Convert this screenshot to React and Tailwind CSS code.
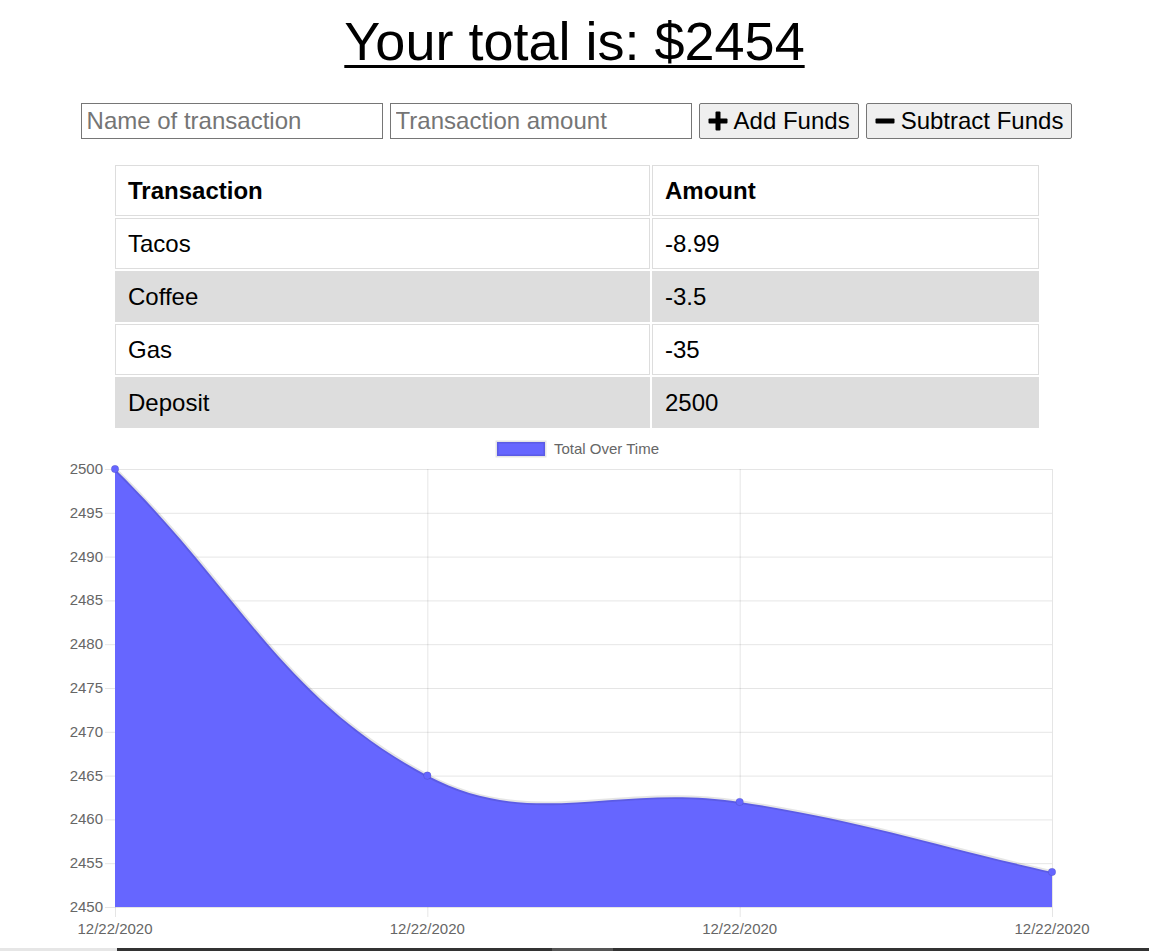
import { useMemo } from 'react'

const FONT = { fontFamily: '"Liberation Sans", Arial, sans-serif' }

const rows = [
  { name: 'Tacos', amount: '-8.99' },
  { name: 'Coffee', amount: '-3.5' },
  { name: 'Gas', amount: '-35' },
  { name: 'Deposit', amount: '2500' },
]

/* chart geometry, in page pixels */
const LEFT = 115
const RIGHT = 1052
const TOP = 469
const BOTTOM = 907
const MIN = 2450
const MAX = 2500
const values = [2500, 2465, 2462, 2454]

const yOf = v => TOP + ((MAX - v) / (MAX - MIN)) * (BOTTOM - TOP)
const xOf = i => LEFT + (i * (RIGHT - LEFT)) / (values.length - 1)

// same spline as chart.js v2 (tension 0.4)
function splinePath(pts, t = 0.4) {
  const cps = pts.map((cur, i) => {
    const prev = pts[i - 1] || cur
    const next = pts[i + 1] || cur
    const d01 = Math.hypot(cur.x - prev.x, cur.y - prev.y)
    const d12 = Math.hypot(next.x - cur.x, next.y - cur.y)
    let s01 = d01 / (d01 + d12)
    let s12 = d12 / (d01 + d12)
    if (isNaN(s01)) s01 = 0
    if (isNaN(s12)) s12 = 0
    const fa = t * s01
    const fb = t * s12
    return {
      prev: { x: cur.x - fa * (next.x - prev.x), y: cur.y - fa * (next.y - prev.y) },
      next: { x: cur.x + fb * (next.x - prev.x), y: cur.y + fb * (next.y - prev.y) },
    }
  })
  let d = `M${pts[0].x},${pts[0].y}`
  for (let i = 1; i < pts.length; i++) {
    const a = cps[i - 1].next
    const b = cps[i].prev
    d += ` C${a.x},${a.y} ${b.x},${b.y} ${pts[i].x},${pts[i].y}`
  }
  return d
}

const PlusIcon = () => (
  <svg width="20" height="20" viewBox="0 0 20 20" className="shrink-0">
    <rect x="7.5" y="0.5" width="5" height="19" rx="1" fill="#000" />
    <rect x="0.5" y="7.5" width="19" height="5" rx="1" fill="#000" />
  </svg>
)

const MinusIcon = () => (
  <svg width="20" height="20" viewBox="0 0 20 20" className="shrink-0">
    <rect x="0.5" y="7.5" width="19" height="5" rx="1" fill="#000" />
  </svg>
)

const Chart = () => {
  const pts = values.map((v, i) => ({ x: xOf(i), y: yOf(v) }))
  const line = useMemo(() => splinePath(pts), [])
  const area = `${line} L${RIGHT},${BOTTOM} L${LEFT},${BOTTOM} Z`
  const yTicks = Array.from({ length: 11 }, (_, i) => MAX - i * 5)

  return (
    <svg width="1149" height="518" viewBox="0 430 1149 518" className="block" style={FONT}>
      {/* legend */}
      <rect x="497" y="442" width="48" height="14" fill="#6666ff" stroke="rgba(0,0,0,0.1)" strokeWidth="3" />
      <text x="554" y="454" fontSize="15" fill="#666">Total Over Time</text>

      {/* horizontal grid + y labels */}
      {yTicks.map(v => (
        <g key={v}>
          <line x1={LEFT - 10} x2={RIGHT} y1={yOf(v) + 0.5} y2={yOf(v) + 0.5} stroke="rgba(0,0,0,0.1)" />
          <text x="103" y={yOf(v) + 5} fontSize="15" fill="#666" textAnchor="end">{v}</text>
        </g>
      ))}

      {/* vertical grid + x labels */}
      {pts.map((p, i) => (
        <g key={i}>
          <line x1={p.x + 0.5} x2={p.x + 0.5} y1={TOP} y2={BOTTOM + 10} stroke="rgba(0,0,0,0.1)" />
          <text x={p.x} y="934" fontSize="15" fill="#666" textAnchor="middle">12/22/2020</text>
        </g>
      ))}

      <path d={area} fill="#6666ff" />
      <path d={line} fill="none" stroke="rgba(0,0,0,0.1)" strokeWidth="3.75" />

      {pts.map((p, i) => (
        <circle key={i} cx={p.x} cy={p.y} r="3.75" fill="#6666ff" stroke="rgba(0,0,0,0.1)" />
      ))}
    </svg>
  )
}

export default function App() {
  return (
    <div className="w-[1149px] h-[951px] overflow-hidden bg-white text-black" style={FONT}>
      {/* title */}
      <div className="h-[103px] pt-[10px] flex justify-center">
        <h1 className="text-[54px] leading-[1.15] underline decoration-[3px] underline-offset-[5px]">Your total is: $2454</h1>
      </div>

      {/* form row */}
      <div className="flex justify-center gap-[7px] pl-[4px] h-[36px]">
        <input
          type="text"
          placeholder="Name of transaction"
          className="w-[302px] h-[36px] border border-[#767676] px-[5px] text-[24px] placeholder:text-[#757575] outline-none"
        />
        <input
          type="number"
          placeholder="Transaction amount"
          className="w-[302px] h-[36px] border border-[#767676] px-[5px] text-[24px] placeholder:text-[#757575] outline-none"
        />
        <button className="h-[36px] flex items-center gap-[6px] px-[8px] bg-[#efefef] border border-[#767676] rounded-[2px] text-[24px]">
          <PlusIcon />
          Add Funds
        </button>
        <button className="h-[36px] flex items-center gap-[6px] px-[8px] bg-[#efefef] border border-[#767676] rounded-[2px] text-[24px]">
          <MinusIcon />
          Subtract Funds
        </button>
      </div>

      {/* transactions */}
      <div className="pt-[24px] pl-[113px]">
        <table className="border-separate border-spacing-[2px] text-[24px]">
          <thead>
            <tr>
              <th className="w-[535px] h-[51px] border border-[#dddddd] pl-[12px] pr-[8px] text-left font-bold">Transaction</th>
              <th className="w-[387px] h-[51px] border border-[#dddddd] pl-[12px] pr-[8px] text-left font-bold">Amount</th>
            </tr>
          </thead>
          <tbody>
            {rows.map((r, i) => (
              <tr key={r.name} className={i % 2 === 1 ? 'bg-[#dddddd]' : 'bg-white'}>
                <td className="h-[51px] border border-[#dddddd] pl-[12px] pr-[8px]">{r.name}</td>
                <td className="h-[51px] border border-[#dddddd] pl-[12px] pr-[8px]">{r.amount}</td>
              </tr>
            ))}
          </tbody>
        </table>
      </div>

      <Chart />

      {/* strip of whatever sits below the fold */}
      <div className="flex h-[3px]">
        <div className="w-[117px] bg-[#e6e6e6]" />
        <div className="w-[435px] bg-[#333333]" />
        <div className="w-[61px] bg-[#555555]" />
        <div className="flex-1 bg-[#333333]" />
      </div>
    </div>
  )
}
